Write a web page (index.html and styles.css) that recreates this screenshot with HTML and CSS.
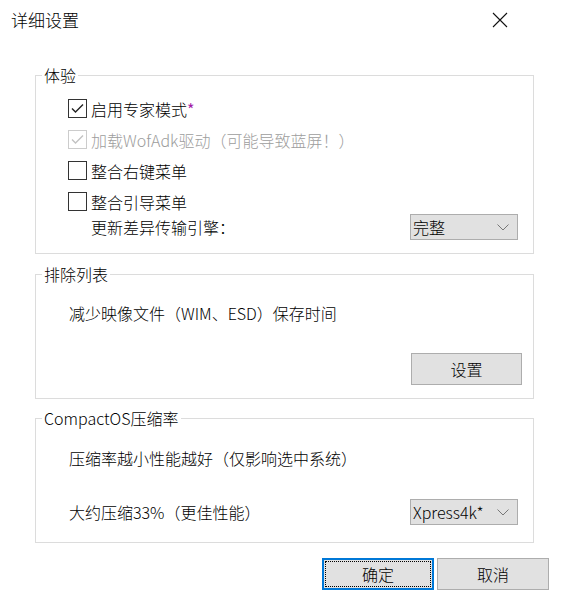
FILE: index.html
```html
<!DOCTYPE html>
<html lang="zh-CN">
<head>
<meta charset="utf-8">
<title>详细设置</title>
<link rel="stylesheet" href="styles.css">
</head>
<body>
<div class="dialog">
  <div class="titlebar">
    <span class="title">详细设置</span>
    <svg class="close" width="16" height="16" viewBox="0 0 16 16"><path d="M1 1 L15 15 M15 1 L1 15" stroke="#111" stroke-width="1.1" fill="none"/></svg>
  </div>
  <div class="content">
    <fieldset class="group g1">
      <legend>体验</legend>
      <div class="check-row">
        <span class="box"><svg width="17" height="17" viewBox="0 0 17 17"><path d="M3 8.5 L6.5 12 L14 4.5" stroke="#222" stroke-width="1.4" fill="none"/></svg></span>
        <span>启用专家模式<span class="star">*</span></span>
      </div>
      <div class="check-row disabled">
        <span class="box"><svg width="17" height="17" viewBox="0 0 17 17"><path d="M3 8.5 L6.5 12 L14 4.5" stroke="#c2c2c2" stroke-width="1.4" fill="none"/></svg></span>
        <span>加载WofAdk驱动（可能导致蓝屏！）</span>
      </div>
      <div class="check-row">
        <span class="box"></span>
        <span>整合右键菜单</span>
      </div>
      <div class="check-row">
        <span class="box"></span>
        <span>整合引导菜单</span>
      </div>
      <div class="engine-row">
        <span>更新差异传输引擎：</span>
        <div class="combo"><span>完整</span><svg width="12" height="7" viewBox="0 0 12 7"><path d="M0.5 0.5 L6 6 L11.5 0.5" stroke="#777" stroke-width="1" fill="none"/></svg></div>
      </div>
    </fieldset>
    <fieldset class="group g2">
      <legend>排除列表</legend>
      <div class="text-row">减少映像文件（WIM、ESD）保存时间</div>
      <button class="btn set-btn" type="button">设置</button>
    </fieldset>
    <fieldset class="group g3">
      <legend>CompactOS压缩率</legend>
      <div class="text-row">压缩率越小性能越好（仅影响选中系统）</div>
      <div class="combo-row">
        <span>大约压缩33%（更佳性能）</span>
        <div class="combo"><span>Xpress4k*</span><svg width="12" height="7" viewBox="0 0 12 7"><path d="M0.5 0.5 L6 6 L11.5 0.5" stroke="#777" stroke-width="1" fill="none"/></svg></div>
      </div>
    </fieldset>
    <div class="footer">
      <button class="btn ok" type="button"><span class="focus">确定</span></button>
      <button class="btn" type="button">取消</button>
    </div>
  </div>
</div>
</body>
</html>
```
FILE: styles.css
```css
* { box-sizing: border-box; }
body {
  margin: 0;
  background: #fff;
  font-family: "Noto Sans CJK SC", "Microsoft YaHei", "Noto Sans", sans-serif;
  font-size: 16px;
  font-weight: 300;
  line-height: 20px;
  color: #000;
}
.dialog { width: 565px; height: 600px; }
.titlebar {
  height: 38px;
  display: flex;
  align-items: center;
  justify-content: space-between;
  padding: 2px 57px 0 11px;
}
.title { font-size: 17px; }
.close { display: block; }
.content { padding: 27px 31px 0 35px; }
.group {
  margin: 0;
  border: 1px solid #dcdcdc;
  padding: 8px 0 12px 6px;
  min-width: 0;
  display: flex;
  flex-direction: column;
}
.group legend { padding: 0 2px; line-height: 20px; }
.g1 { padding-bottom: 13px; }
.check-row {
  height: 31px;
  display: flex;
  align-items: center;
  gap: 4px;
  padding-left: 26px;
}
.box {
  width: 19px;
  height: 19px;
  border: 1px solid #333;
  background: #fff;
  display: flex;
  align-items: center;
  justify-content: center;
}
.box svg { display: block; }
.disabled { color: #9d9d9d; }
.disabled .box { border-color: #cccccc; }
.star { color: #a21ca6; font-weight: 400; }
.engine-row, .combo-row {
  height: 26px;
  display: flex;
  align-items: center;
  justify-content: space-between;
  padding-right: 15px;
}
.engine-row { margin-top: -3px; padding-left: 49px; }
.combo {
  width: 108px;
  height: 26px;
  background: #e1e1e1;
  border: 1px solid #adadad;
  display: flex;
  align-items: center;
  justify-content: space-between;
  padding: 0 8px 0 2px;
}
.combo svg { display: block; margin-top: 1px; }
.g2 { margin-top: 10px; padding-top: 13px; padding-bottom: 13px; }
.g3 { margin-top: 9px; padding-top: 14px; padding-bottom: 17px; }
.text-row {
  height: 31px;
  display: flex;
  align-items: center;
  padding-left: 27px;
}
.combo-row { margin-top: 26px; padding-left: 27px; }
.btn {
  font: inherit;
  color: #000;
  width: 111px;
  height: 32px;
  background: #e1e1e1;
  border: 1px solid #adadad;
  padding: 0;
  display: flex;
  align-items: center;
  justify-content: center;
}
.set-btn { margin-top: 25px; align-self: flex-end; margin-right: 11px; }
.footer {
  margin-top: 15px;
  display: flex;
  justify-content: flex-end;
  gap: 3px;
  margin-right: -15px;
}
.footer .btn { width: 112px; }
.ok { border: 2px solid #0078d7; padding: 1px; }
.focus {
  width: 100%;
  height: 100%;
  border: 1px dotted #000;
  display: flex;
  align-items: center;
  justify-content: center;
}
```
